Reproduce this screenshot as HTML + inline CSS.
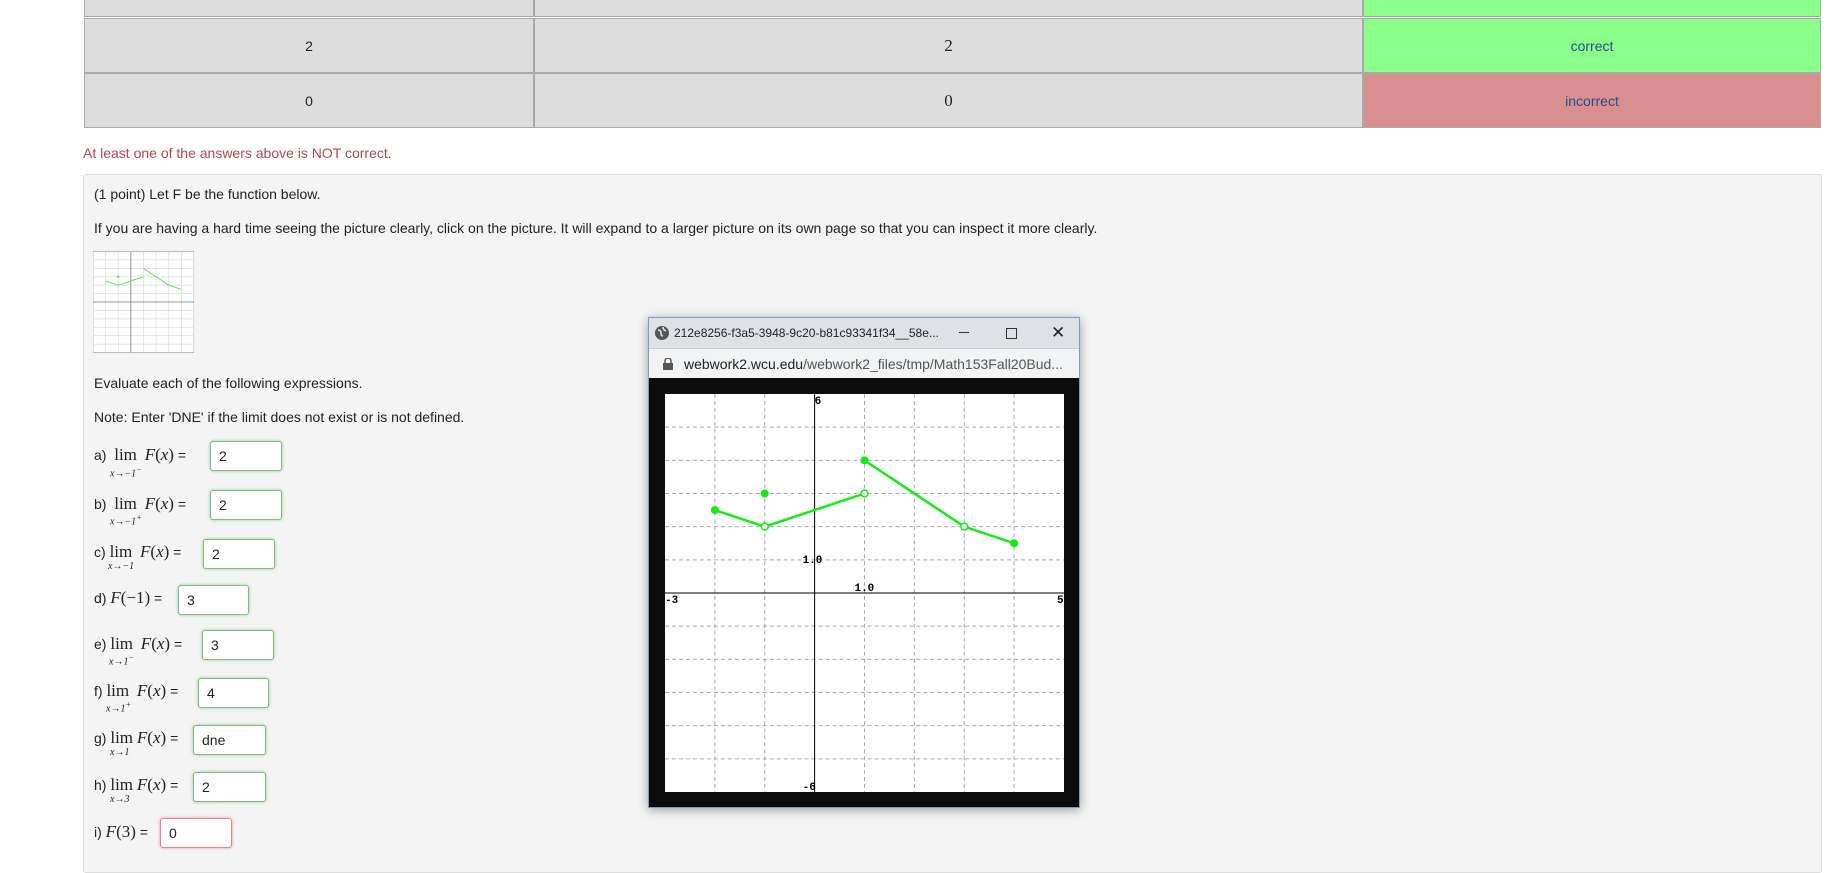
<!DOCTYPE html>
<html><head><meta charset="utf-8"><style>
*{margin:0;padding:0;box-sizing:border-box}
body{width:1834px;height:871px;overflow:hidden;background:#fff;font-family:"Liberation Sans",sans-serif;font-size:14px;color:#222;position:relative}
.a{position:absolute}
.cell{position:absolute;background:#ddd;border:1px solid #aaa;display:flex;align-items:center;justify-content:center;font-size:14px}
.m{font-family:"Liberation Serif",serif;font-size:17px}
.inp{position:absolute;background:#fff;border:1px solid #7cbf7c;border-radius:3px;box-shadow:0 0 3px #9c9;padding-left:8px;display:flex;align-items:center;font-size:14px;height:30px}
.lab{position:absolute;font-size:14px;white-space:nowrap}
.sub{position:absolute;font-family:"Liberation Serif",serif;font-size:10px;font-style:italic}
</style></head><body>
<div class="cell" style="left:84px;top:-2px;width:450px;height:19px"></div>
<div class="cell" style="left:534px;top:-2px;width:829px;height:19px"></div>
<div class="cell" style="left:1363px;top:-2px;width:458px;height:19px;background:#8aff8a"></div>
<div class="cell" style="left:84px;top:18px;width:450px;height:55px">2</div>
<div class="cell m" style="left:534px;top:18px;width:829px;height:55px">2</div>
<div class="cell" style="left:1363px;top:18px;width:458px;height:55px;background:#8aff8a;color:#2a4a8a">correct</div>
<div class="cell" style="left:84px;top:73px;width:450px;height:55px">0</div>
<div class="cell m" style="left:534px;top:73px;width:829px;height:55px">0</div>
<div class="cell" style="left:1363px;top:73px;width:458px;height:55px;background:#d98f8f;color:#2a4a8a">incorrect</div>

<div class="a" style="left:83px;top:145px;color:#b04a4a;font-size:14px">At least one of the answers above is NOT correct.</div>

<div class="a" style="left:83px;top:174px;width:1739px;height:699px;background:#f4f4f4;border:1px solid #ddd;border-radius:3px"></div>
<div class="a" style="left:94px;top:186px">(1 point) Let F be the function below.</div>
<div class="a" style="left:94px;top:220px">If you are having a hard time seeing the picture clearly, click on the picture. It will expand to a larger picture on its own page so that you can inspect it more clearly.</div>

<svg class="a" style="left:93px;top:251px" width="101" height="102" viewBox="0 0 400 400">
<rect x="0" y="0" width="400" height="400" fill="#fff" stroke="#bbb" stroke-width="4"/>
<g stroke="#ddd" stroke-width="3">
<path d="M50 0V400M100 0V400M200 0V400M250 0V400M300 0V400M350 0V400M0 33H400M0 67H400M0 100H400M0 133H400M0 167H400M0 233H400M0 267H400M0 300H400M0 333H400M0 367H400"/></g>
<path d="M150 0V400M0 200H400" stroke="#777" stroke-width="3"/>
<path d="M50 117L100 133L200 100M200 67L300 133L350 150" stroke="#5e5" stroke-width="4" fill="none"/>
<circle cx="100" cy="100" r="5" fill="#5e5"/>
</svg>

<div class="a" style="left:94px;top:375px">Evaluate each of the following expressions.</div>
<div class="a" style="left:94px;top:409px">Note: Enter 'DNE' if the limit does not exist or is not defined.</div>

<div class="lab" style="left:94px;top:445px">a) &nbsp;<span class="m">lim</span>&nbsp; <span class="m"><i>F</i>(<i>x</i>)</span> =</div>
<div class="sub" style="left:110px;top:465px">x→−1<sup>−</sup></div>
<div class="inp" style="left:210px;top:441px;width:72px">2</div>

<div class="lab" style="left:94px;top:494px">b) &nbsp;<span class="m">lim</span>&nbsp; <span class="m"><i>F</i>(<i>x</i>)</span> =</div>
<div class="sub" style="left:110px;top:513px">x→−1<sup>+</sup></div>
<div class="inp" style="left:210px;top:490px;width:72px">2</div>

<div class="lab" style="left:94px;top:542px">c) <span class="m">lim</span>&nbsp; <span class="m"><i>F</i>(<i>x</i>)</span> =</div>
<div class="sub" style="left:108px;top:561px">x→−1</div>
<div class="inp" style="left:203px;top:539px;width:72px">2</div>

<div class="lab" style="left:94px;top:588px">d) <span class="m"><i>F</i>(−1)</span> =</div>
<div class="inp" style="left:178px;top:585px;width:71px">3</div>

<div class="lab" style="left:94px;top:634px">e) <span class="m">lim</span>&nbsp; <span class="m"><i>F</i>(<i>x</i>)</span> =</div>
<div class="sub" style="left:109px;top:653px">x→1<sup>−</sup></div>
<div class="inp" style="left:202px;top:630px;width:72px">3</div>

<div class="lab" style="left:94px;top:681px">f) <span class="m">lim</span>&nbsp; <span class="m"><i>F</i>(<i>x</i>)</span> =</div>
<div class="sub" style="left:106px;top:700px">x→1<sup>+</sup></div>
<div class="inp" style="left:198px;top:678px;width:71px">4</div>

<div class="lab" style="left:94px;top:728px">g) <span class="m">lim</span> <span class="m"><i>F</i>(<i>x</i>)</span> =</div>
<div class="sub" style="left:110px;top:747px">x→1</div>
<div class="inp" style="left:193px;top:725px;width:73px">dne</div>

<div class="lab" style="left:94px;top:775px">h) <span class="m">lim</span> <span class="m"><i>F</i>(<i>x</i>)</span> =</div>
<div class="sub" style="left:110px;top:794px">x→3</div>
<div class="inp" style="left:193px;top:772px;width:73px">2</div>

<div class="lab" style="left:94px;top:822px">i) <span class="m"><i>F</i>(3)</span> =</div>
<div class="inp" style="left:160px;top:818px;width:72px;border-color:#d88;box-shadow:0 0 3px #e99">0</div>

<!-- popup -->
<div class="a" style="left:648px;top:317px;width:432px;height:491px;background:#0c0c0c;border:1px solid #7a9cc6;box-shadow:0 2px 10px rgba(0,0,0,.35)"></div>
<div class="a" style="left:649px;top:318px;width:430px;height:30px;background:#dee1e6;font-size:12px;display:flex;align-items:center;color:#222">
<svg width="16" height="16" style="margin-left:5px;margin-right:4px" viewBox="0 0 16 16"><circle cx="8" cy="8" r="7" fill="#555"/><path d="M4 5q3 0 3 3t2 3M9 2q0 3 3 4" stroke="#dee1e6" stroke-width="1.6" fill="none"/></svg>
<span>212e8256-f3a5-3948-9c20-b81c93341f34__58e...</span>
<span class="a" style="left:310px;top:14px;width:10px;height:1px;background:#333"></span>
<span class="a" style="left:357px;top:10px;width:11px;height:11px;border:1px solid #333"></span>
<span class="a" style="left:402px;top:5px;font-size:17px">✕</span>
</div>
<div class="a" style="left:649px;top:348px;width:430px;height:30px;background:#f1f3f4;border-top:1px solid #ccc;font-size:14px;display:flex;align-items:center;color:#555">
<svg width="10" height="12" style="margin-left:14px;margin-right:11px" viewBox="0 0 10 12"><rect x="0" y="5" width="10" height="7" fill="#555"/><path d="M2 5V3a3 3 0 0 1 6 0v2" stroke="#555" stroke-width="1.5" fill="none"/></svg>
<span><span style="color:#222">webwork2.wcu.edu</span>/webwork2_files/tmp/Math153Fall20Bud...</span>
</div>
<svg class="a" style="left:665px;top:394px" width="399" height="398" viewBox="0 0 400 400" preserveAspectRatio="none">
<rect width="400" height="400" fill="#fff"/>
<g stroke="#aaa" stroke-width="1" stroke-dasharray="4,3">
<path d="M50 0V400M100 0V400M200 0V400M250 0V400M300 0V400M350 0V400M0 33.3H400M0 66.7H400M0 100H400M0 133.3H400M0 166.7H400M0 233.3H400M0 266.7H400M0 300H400M0 333.3H400M0 366.7H400"/></g>
<path d="M150 0V400M0 200H400" stroke="#000" stroke-width="1"/>
<path d="M50 116.7L100 133.3L200 100M200 66.7L300 133.3L350 150" stroke="#1e1" stroke-width="2.5" fill="none"/>
<g fill="#1e1"><circle cx="50" cy="116.7" r="4"/><circle cx="100" cy="100" r="4"/><circle cx="200" cy="66.7" r="4"/><circle cx="350" cy="150" r="4"/></g>
<g fill="#fff" stroke="#1e1" stroke-width="1.5"><circle cx="100" cy="133.3" r="3.5"/><circle cx="200" cy="100" r="3.5"/><circle cx="300" cy="133.3" r="3.5"/></g>
<g font-family="Liberation Mono,monospace" font-size="11" font-weight="bold" fill="#000">
<text x="150" y="10">6</text><text x="138" y="170">1.0</text><text x="190" y="198">1.0</text>
<text x="0" y="210">-3</text><text x="393" y="210">5</text><text x="138" y="398">-6</text></g>
</svg>
</body></html>
